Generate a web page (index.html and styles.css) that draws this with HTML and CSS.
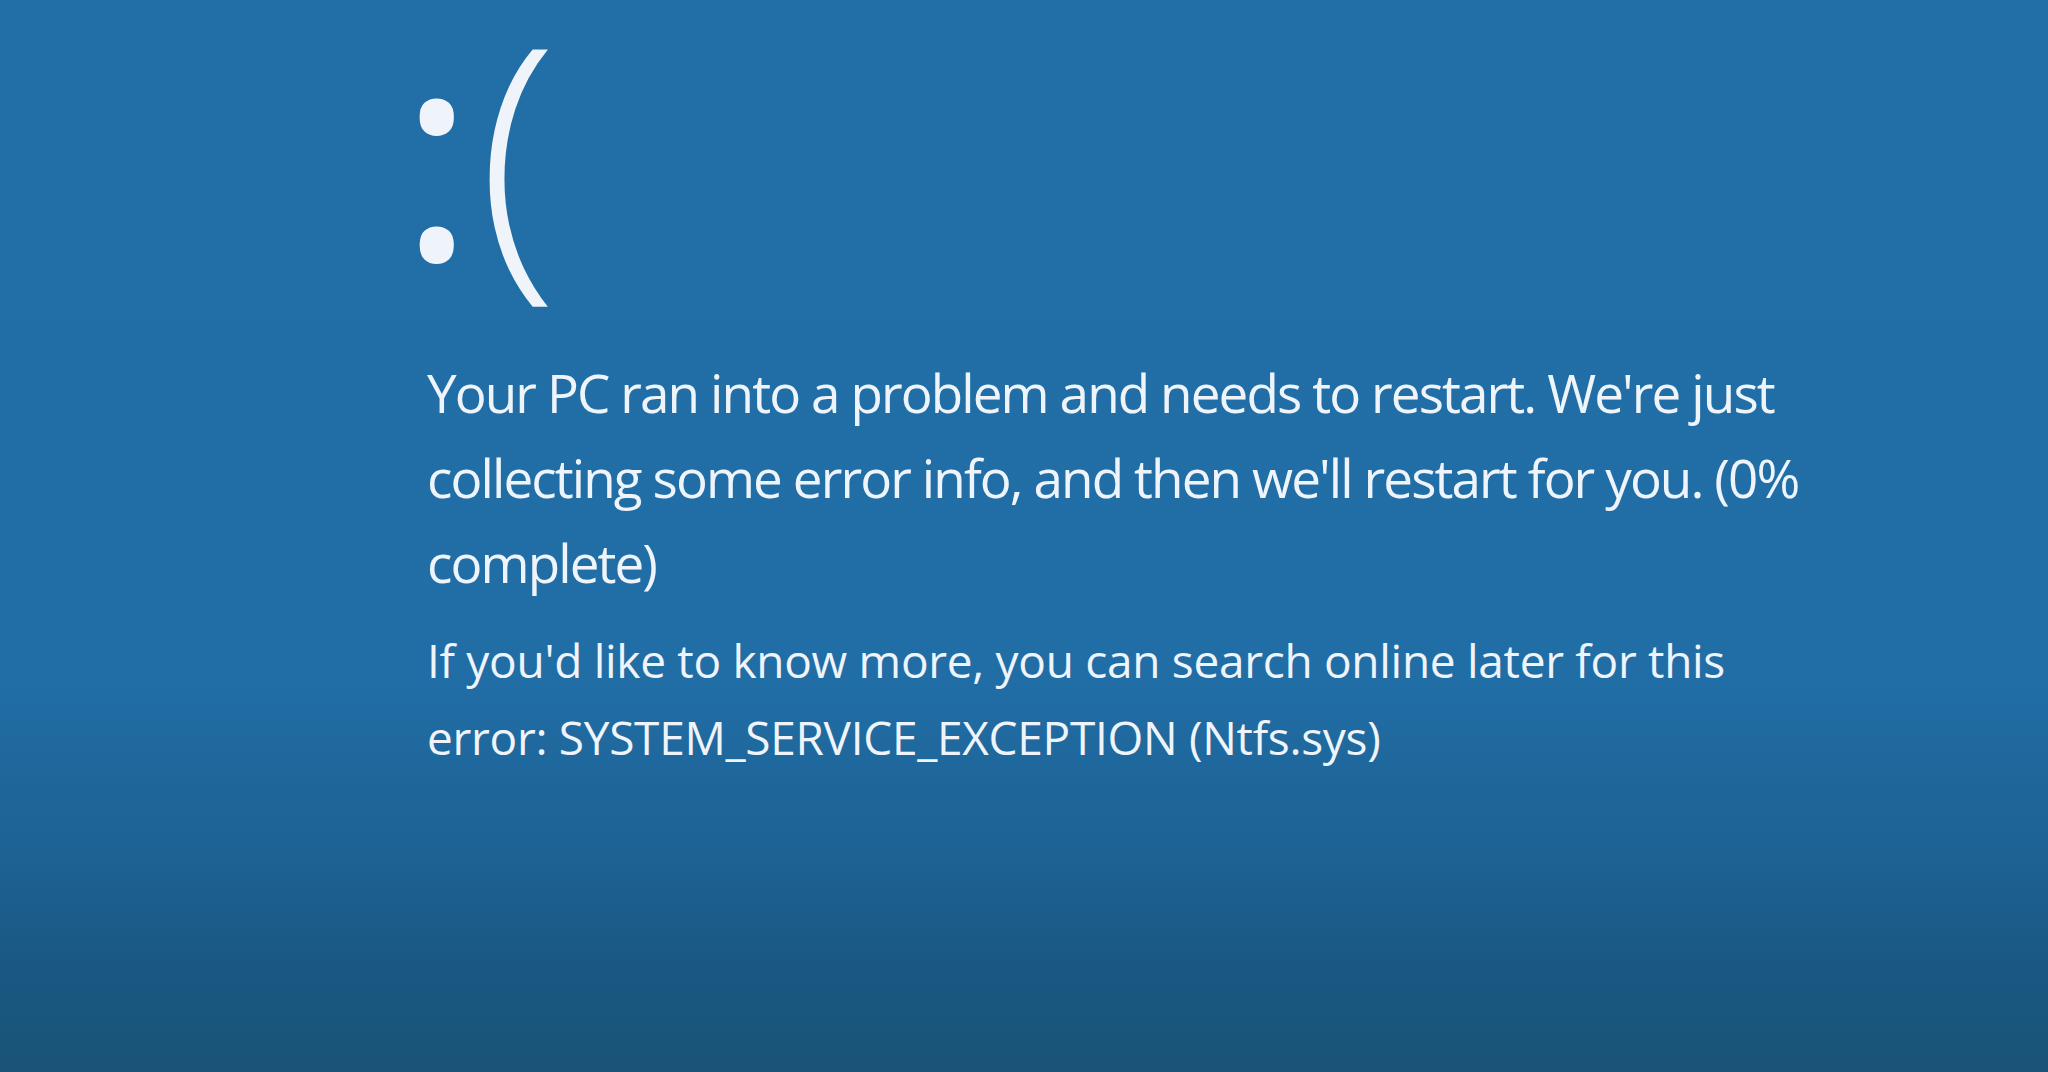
FILE: index.html
```html
<!DOCTYPE html>
<html lang="en">
<head>
<meta charset="utf-8">
<title>Blue screen</title>
<link rel="stylesheet" href="styles.css">
</head>
<body>
<main class="screen">
  <div class="content">
    <div class="face"><span class="eyes">:</span><span class="mouth">(</span></div>
    <p class="message">Your PC ran into a problem and needs to restart. We're just collecting some error info, and then we'll restart for you. (0% complete)</p>
    <p class="details">If you'd like to know more, you can search online later for this error: SYSTEM_SERVICE_EXCEPTION (Ntfs.sys)</p>
  </div>
</main>
</body>
</html>
```
FILE: styles.css
```css
html, body {
  margin: 0;
  padding: 0;
  height: 100%;
}
body {
  background: #216ea7;
  overflow: hidden;
}
.screen {
  width: 2048px;
  height: 1072px;
  background: linear-gradient(to bottom, #226fa8 0%, #216ea7 62%, #1d6293 80%, #1a5883 90%, #195377 100%);
  box-sizing: border-box;
  padding: 17px 0 0 427px;
  font-family: "Open Sans", "Noto Sans", sans-serif;
  color: #eef4fa;
}
.content {
  display: flex;
  flex-direction: column;
  width: 1420px;
}
.face {
  font-size: 295px;
  line-height: 257px;
  height: 257px;
  display: flex;
  align-items: baseline;
}
.eyes {
  font-weight: 400;
  margin-left: -29px;
}
.mouth {
  font-weight: 300;
  margin-left: 2px;
}
.message {
  margin: 76px 0 0;
  font-size: 53px;
  line-height: 85px;
  letter-spacing: -1.9px;
}
.details {
  margin: 17px 0 0;
  font-size: 46px;
  line-height: 77px;
  letter-spacing: -0.3px;
}
```
